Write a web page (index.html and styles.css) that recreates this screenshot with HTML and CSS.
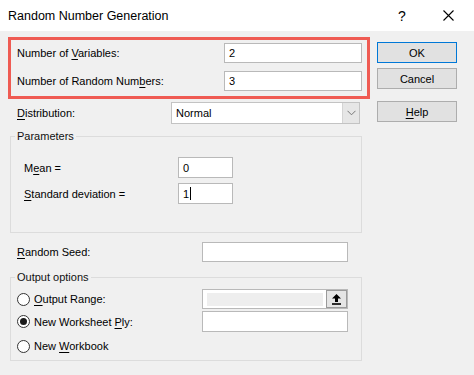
FILE: index.html
```html
<!DOCTYPE html>
<html>
<head>
<meta charset="utf-8">
<link rel="stylesheet" href="styles.css">
</head>
<body>
<div class="window">
  <div class="titlebar">
    <div class="title">Random Number Generation</div>
    <div class="cap cap-help">?</div>
    <div class="cap cap-close">
      <svg width="11" height="11" viewBox="0 0 11 11"><path d="M0.5 0.5 L10.5 10.5 M10.5 0.5 L0.5 10.5" stroke="#000" stroke-width="1.1" fill="none"/></svg>
    </div>
  </div>
  <div class="body">
    <div class="main">
      <div class="highlight">
        <div class="row">
          <span>Number of <u>V</u>ariables:</span>
          <div class="field w-num">2</div>
        </div>
        <div class="row">
          <span>Number of Random Num<u>b</u>ers:</span>
          <div class="field w-num">3</div>
        </div>
      </div>
      <div class="dist-row">
        <span><u>D</u>istribution:</span>
        <div class="select">
          <span class="select-text">Normal</span>
          <span class="select-arrow">
            <svg width="9" height="6" viewBox="0 0 9 6"><path d="M0.5 0.8 L4.5 4.8 L8.5 0.8" stroke="#777" stroke-width="1" fill="none"/></svg>
          </span>
        </div>
      </div>
      <fieldset class="group params">
        <legend>Parameters</legend>
        <div class="prow">
          <span class="plabel">M<u>e</u>an =</span>
          <div class="field w-param">0</div>
        </div>
        <div class="prow">
          <span class="plabel"><u>S</u>tandard deviation =</span>
          <div class="field w-param">1<span class="caret"></span></div>
        </div>
      </fieldset>
      <div class="seed-row">
        <span><u>R</u>andom Seed:</span>
        <div class="field w-seed"></div>
      </div>
      <fieldset class="group output">
        <legend>Output options</legend>
        <div class="orow r1">
          <div class="olabel"><span class="radio"></span><span><u>O</u>utput Range:</span></div>
          <div class="field w-seed range">
            <span class="range-inner"></span>
            <span class="range-btn">
              <svg width="9" height="11" viewBox="0 0 9 11"><path d="M4.5 0 L9 4.5 L6 4.5 L6 8 L3 8 L3 4.5 L0 4.5 Z" fill="#000"/><rect x="0" y="9.2" width="9" height="1.6" fill="#000"/></svg>
            </span>
          </div>
        </div>
        <div class="orow r2">
          <div class="olabel"><span class="radio checked"></span><span>New Worksheet <u>P</u>ly:</span></div>
          <div class="field w-seed tall"></div>
        </div>
        <div class="orow r3">
          <div class="olabel"><span class="radio"></span><span>New <u>W</u>orkbook</span></div>
        </div>
      </fieldset>
    </div>
    <div class="side">
      <div class="btn btn-ok">OK</div>
      <div class="btn btn-cancel">Cancel</div>
      <div class="btn btn-help"><u>H</u>elp</div>
    </div>
  </div>
</div>
</body>
</html>
```

FILE: styles.css
```css
* { box-sizing: border-box; }
body {
  margin: 0;
  background: #f0f0f0;
  font-family: "Liberation Sans", Arial, sans-serif;
  font-size: 11px;
  color: #000;
}
u { text-decoration-thickness: 1px; text-underline-offset: 2px; }
.window {
  width: 474px;
  height: 375px;
  background: #f0f0f0;
  overflow: hidden;
}
.titlebar {
  height: 31px;
  background: #fff;
  display: flex;
  align-items: center;
  padding-left: 8px;
}
.title { flex: 1; font-size: 12.5px; color: #000; }
.cap {
  width: 46px;
  height: 31px;
  display: flex;
  align-items: center;
  justify-content: center;
  font-size: 14px;
  color: #000;
}
.cap-close { margin-right: 3px; }
.body { display: flex; }
.main { width: 370px; padding-left: 8px; }
.side {
  width: 80px;
  margin-left: 7px;
  padding-top: 11px;
  display: flex;
  flex-direction: column;
}
.highlight {
  margin-top: 6px;
  border: 3px solid #ef5b53;
  padding: 3px 5px 5px 6px;
  display: flex;
  flex-direction: column;
  gap: 8px;
}
.row {
  height: 20px;
  display: flex;
  align-items: center;
  justify-content: space-between;
}
.field {
  height: 20px;
  border: 1px solid #b9b9b9;
  background: #fff;
  padding-left: 4px;
  display: flex;
  align-items: center;
  color: #000;
}
.w-num { width: 138px; }
.w-param { width: 55px; height: 21px; }
.w-seed { width: 146px; }
.caret { display: inline-block; width: 1px; height: 13px; background: #000; margin-left: 1px; }
.dist-row {
  margin-top: 3px;
  height: 22px;
  display: flex;
  align-items: center;
  justify-content: space-between;
  padding-left: 9px;
  padding-right: 10px;
}
.select {
  width: 189px;
  height: 22px;
  border: 1px solid #c3c3c3;
  background: #fff;
  display: flex;
  align-items: stretch;
}
.select-text { flex: 1; padding-left: 4px; display: flex; align-items: center; color: #000; }
.select-arrow {
  width: 17px;
  background: #e6e6e6;
  border-left: 1px solid #d4d4d4;
  display: flex;
  align-items: center;
  justify-content: center;
}
.group {
  margin: 0 8px 0 2px;
  border: 1px solid #dcdcdc;
  padding: 0 4px;
  min-width: 0;
}
.group legend { padding: 0 2px; color: #111; line-height: 16px; height: 16px; }
.params { margin-top: 4px; padding-top: 13px; padding-bottom: 28px; }
.prow {
  display: flex;
  align-items: center;
  padding-left: 9px;
}
.prow + .prow { margin-top: 5px; }
.plabel { width: 154px; }
.seed-row {
  margin-top: 9px;
  height: 20px;
  display: flex;
  align-items: center;
  padding-left: 9px;
}
.seed-row span { width: 185px; }
.output { margin-top: 7px; padding-top: 4px; padding-bottom: 4px; }
.orow { display: flex; align-items: center; padding-left: 2px; }
.r1 { height: 20px; }
.r2 { height: 21px; margin-top: 2px; }
.r3 { height: 20px; margin-top: 4px; }
.olabel { width: 185px; display: flex; align-items: center; gap: 4px; }
.radio {
  width: 13px;
  height: 13px;
  border: 1px solid #333;
  border-radius: 50%;
  background: #fff;
  position: relative;
  flex-shrink: 0;
}
.radio.checked::after {
  content: "";
  position: absolute;
  left: 2px;
  top: 2px;
  width: 7px;
  height: 7px;
  border-radius: 50%;
  background: #1a1a1a;
}
.tall { height: 21px; }
.range { padding: 0; align-items: center; }
.range-inner {
  margin-left: 4px;
  width: 116px;
  height: 13px;
  background: #eeeeee;
}
.range-btn {
  margin-left: auto;
  width: 21px;
  height: 18px;
  background: #e5e5e5;
  border: 1px solid #9a9a9a;
  display: flex;
  align-items: center;
  justify-content: center;
}
.btn {
  height: 21px;
  border: 1px solid #adadad;
  background: #e1e1e1;
  display: flex;
  align-items: center;
  justify-content: center;
  color: #000;
}
.btn-ok { border-color: #0078d7; }
.btn-cancel { margin-top: 5px; }
.btn-help { margin-top: 12px; }
```
